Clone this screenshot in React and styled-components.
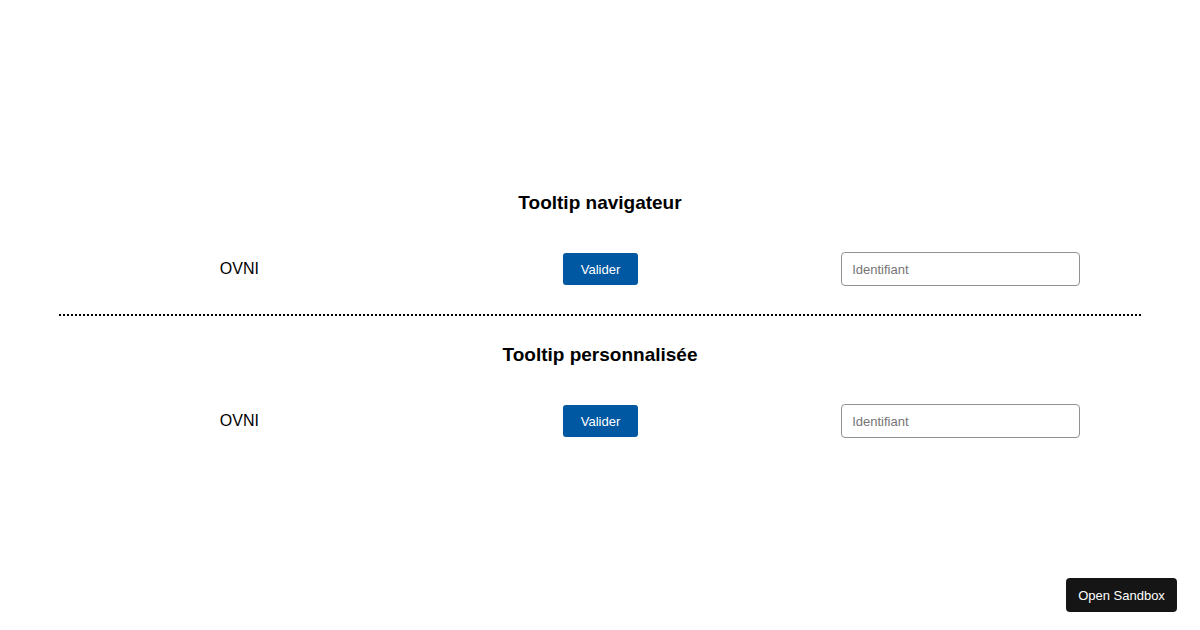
import React from 'react'
import styled, { createGlobalStyle } from 'styled-components'

const GlobalStyle = createGlobalStyle`
    html, body {
        margin: 0;
        padding: 0;
        background: #fff;
        font-family: "Liberation Sans", Arial, sans-serif;
        color: #000;
    }
`

const Page = styled.div`
    width: 100%;
    height: 630px;
    display: flex;
    flex-direction: column;
    justify-content: center;
    padding: 0 59px;
    box-sizing: border-box;
`

const Section = styled.section`
    display: flex;
    flex-direction: column;
    align-items: center;
    padding-top: ${props => props.paddingTop};
    padding-bottom: ${props => props.paddingBottom};
`

const Title = styled.h2`
    margin: 0;
    font-size: 19px;
    font-weight: bold;
    line-height: 22px;
`

const Row = styled.div`
    width: 100%;
    margin-top: 38px;
    display: grid;
    grid-template-columns: 1fr 1fr 1fr;
    align-items: center;
    justify-items: center;
`

const Label = styled.span`
    font-size: 16px;
`

const Button = styled.button`
    width: 75px;
    height: 32px;
    margin-left: 1px;
    border: none;
    border-radius: 3px;
    background-color: #0058a3;
    color: #fff;
    font-family: "Liberation Sans", Arial, sans-serif;
    font-size: 13px;
    cursor: pointer;
`

const Input = styled.input`
    width: 239px;
    height: 34px;
    box-sizing: border-box;
    border: 1px solid #929292;
    border-radius: 4px;
    padding: 0 10px;
    font-family: "Liberation Sans", Arial, sans-serif;
    font-size: 13px;

    ::placeholder {
        color: #767676;
    }
`

const Separator = styled.hr`
    width: 100%;
    margin: 0;
    border: none;
    border-top: 2px dotted #000;
`

const SandboxButton = styled.a`
    position: fixed;
    right: 23px;
    bottom: 18px;
    width: 111px;
    height: 34px;
    display: flex;
    align-items: center;
    justify-content: center;
    background-color: #151515;
    color: #fff;
    border-radius: 4px;
    font-family: "Liberation Sans", Arial, sans-serif;
    font-size: 13px;
    text-decoration: none;
`

function Demo({ title, paddingTop, paddingBottom }) {
    return (
        <Section paddingTop={paddingTop} paddingBottom={paddingBottom}>
            <Title>{title}</Title>
            <Row>
                <Label>OVNI</Label>
                <Button>Valider</Button>
                <Input type='text' placeholder='Identifiant' />
            </Row>
        </Section>
    )
}

export default function App() {
    return (
        <>
            <GlobalStyle />
            <Page>
                <Demo title='Tooltip navigateur' paddingBottom={'28px'} />
                <Separator />
                <Demo title='Tooltip personnalisée' paddingTop={'28px'} />
            </Page>
            <SandboxButton href='#'>Open Sandbox</SandboxButton>
        </>
    )
}
